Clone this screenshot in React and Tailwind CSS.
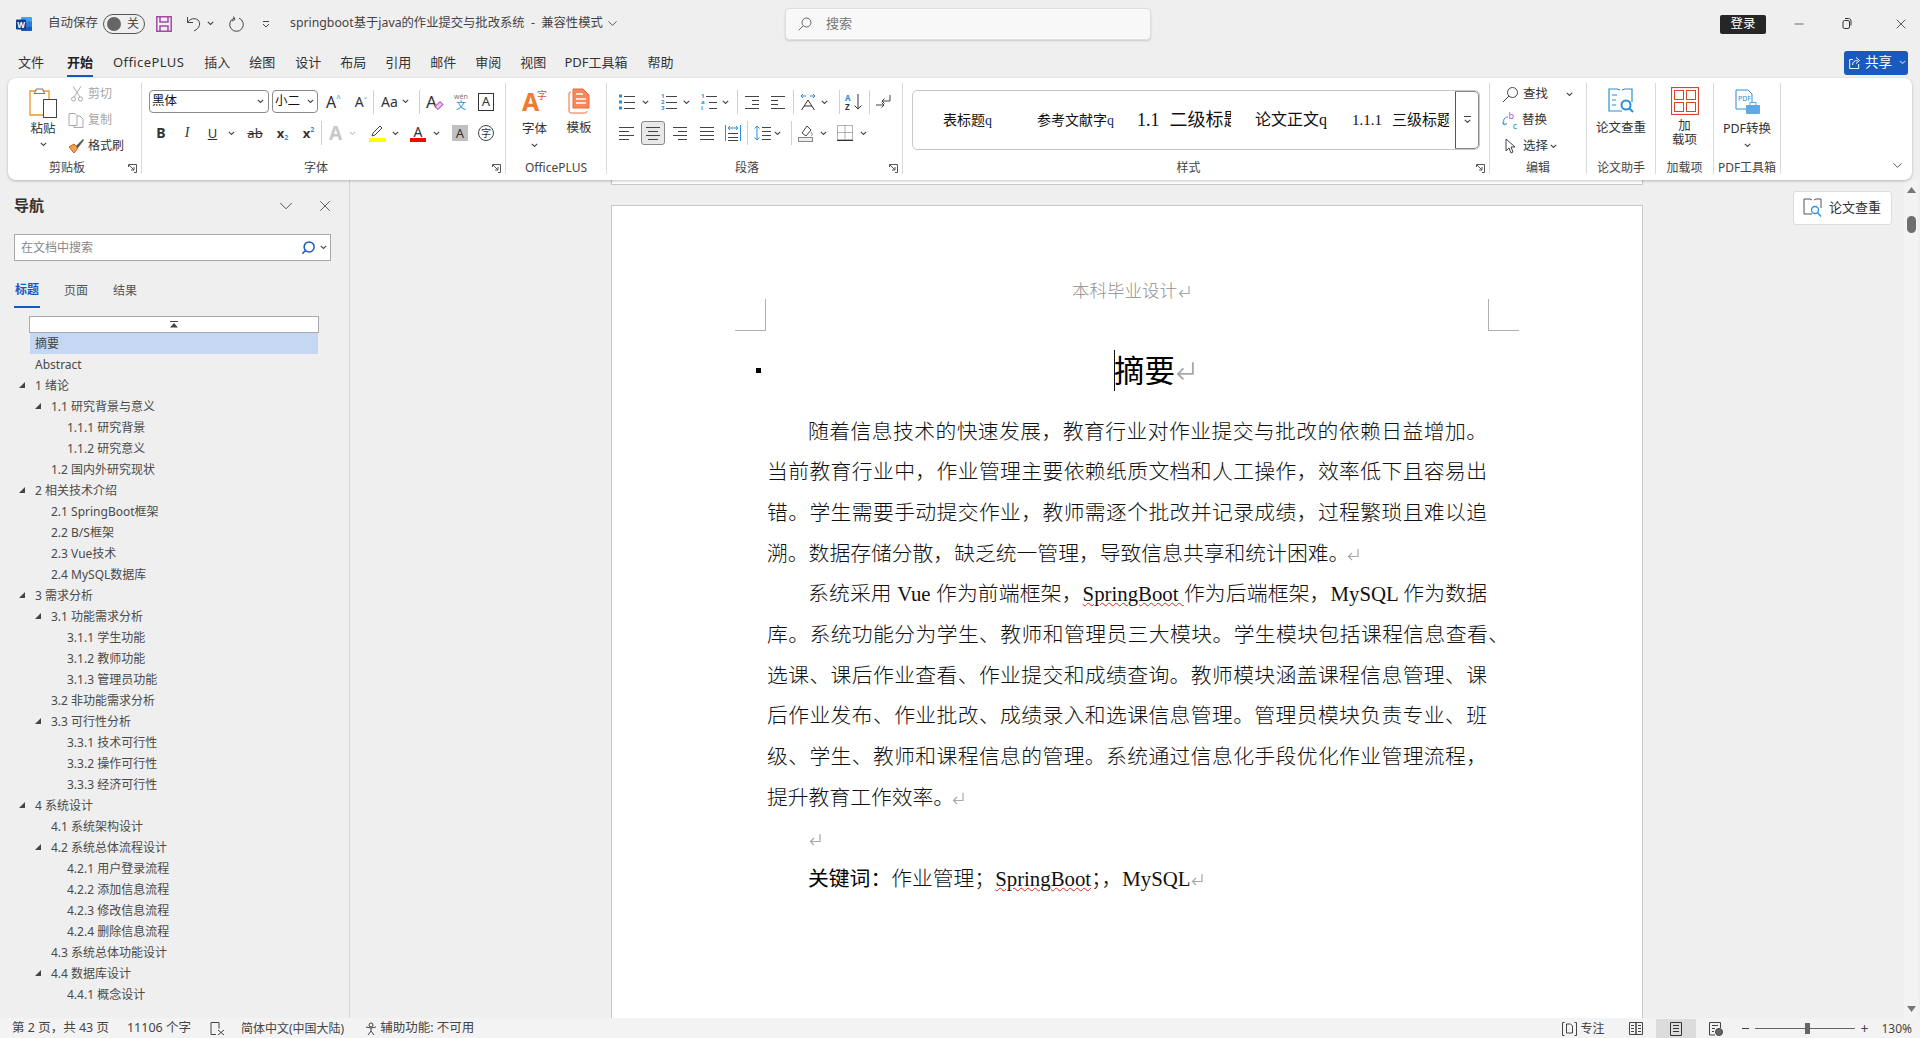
import { ChevronDown, X, Minus, Search } from "lucide-react";

const Chev = ({ className = "" }) => (
  <svg width="7" height="5" viewBox="0 0 7 5" fill="none" stroke="#444" strokeWidth="1.1" className={"shrink-0 " + className}>
    <path d="M.8.8 3.5 3.5 6.2.8" />
  </svg>
);

const Divider = ({ className = "" }) => <span className={"block w-px h-[24px] bg-[#d0d0d0] shrink-0 " + className} />;

const Launcher = () => (
  <svg width="9" height="9" viewBox="0 0 9 9" fill="none" stroke="#555" className="absolute right-[4px] bottom-[1px]">
    <path d="M.5 3V.5h8v8H6M1 1l5 5M6 3v3H3" />
  </svg>
);

const Group = ({ label, launcher, className = "", children }) => (
  <div className={"relative shrink-0 h-[91px] my-[5px] border-r border-[#dadada] flex flex-col " + className}>
    <div className="h-[78px] shrink-0">{children}</div>
    <div className={"h-[13px] flex items-center justify-center text-[12px] text-[#444] whitespace-nowrap " + (launcher ? "pr-[15px]" : "")}>{label}</div>
    {launcher && <Launcher />}
  </div>
);

const Lines = ({ rows, className = "", color = "#444" }) => (
  <svg width="16" height="16" viewBox="0 0 16 16" stroke={color} className={"shrink-0 " + className}>
    {rows.map((r, i) => (
      <path key={i} d={`M${r[0]} ${r[2]}.5H${r[1]}`} />
    ))}
  </svg>
);

const ReturnMark = ({ className = "" }) => (
  <svg width="14" height="14" viewBox="0 0 14 14" fill="none" stroke="#a8a8a8" strokeWidth="1.2" className={"inline-block shrink-0 " + className}>
    <path d="M12 2v7.5H2.5M6 6 2.5 9.500 6 13" />
  </svg>
);

const tabs = [
  ["文件", "ml-[18px]"],
  ["开始", "ml-[23px] font-semibold text-[#222]"],
  ["OfficePLUS", "ml-[20px] tracking-[0.4px]"],
  ["插入", "ml-[20px]"],
  ["绘图", "ml-[19px]"],
  ["设计", "ml-[20px]"],
  ["布局", "ml-[19px]"],
  ["引用", "ml-[19px]"],
  ["邮件", "ml-[19px]"],
  ["审阅", "ml-[19px]"],
  ["视图", "ml-[19px]"],
  ["PDF工具箱", "ml-[18px]"],
  ["帮助", "ml-[20px]"],
];

const TitleBar = () => (
  <div className="h-[47px] shrink-0 flex items-center text-[12.5px] text-[#444] whitespace-nowrap">
    <svg width="16" height="16" viewBox="0 0 16 16" className="ml-[16px] shrink-0">
      <rect x="5" y="1" width="11" height="14" rx="1" fill="#41a5ee" />
      <rect x="5" y="5.500" width="11" height="5" fill="#2b7cd3" />
      <rect x="5" y="10.500" width="11" height="4.500" rx="1" fill="#185abd" />
      <rect x="0" y="3.500" width="10" height="10" rx="1" fill="#103f91" />
      <text x="5" y="11.500" fontSize="8" fontWeight="700" fill="#fff" textAnchor="middle">W</text>
    </svg>
    <span className="ml-[16px] w-[48px]">自动保存</span>
    <span className="ml-[7px] w-[42px] h-[20px] rounded-full border border-[#555] flex items-center shrink-0">
      <span className="ml-[3px] w-[14px] h-[14px] rounded-full bg-[#666]" />
      <span className="ml-[6px] text-[12px]">关</span>
    </span>
    <svg width="16" height="16" viewBox="0 0 16 16" fill="none" stroke="#a349a4" strokeWidth="1.5" className="ml-[11px] shrink-0">
      <path d="M.8.8h14.400v14.400H.8zM4 1v5h8V1M4 15v-5h8v5" />
    </svg>
    <svg width="16" height="16" viewBox="0 0 16 16" fill="none" stroke="#444" className="ml-[14px] shrink-0">
      <path d="M1.500 1v5.500H7M1.500 6.500C4 2.500 9 1.500 12 4c3 3 2 8-4 11" />
    </svg>
    <Chev className="ml-[5px]" />
    <svg width="16" height="16" viewBox="0 0 16 16" fill="none" stroke="#444" className="ml-[15px] shrink-0">
      <path d="M5 2.200a6.800 6.800 0 1 0 5 0M4.500 .5 6 3.500 3 5" />
    </svg>
    <svg width="8" height="8" viewBox="0 0 8 8" fill="none" stroke="#444" className="ml-[17px] shrink-0">
      <path d="M1 1.500h6M1 4l3 3 3-3" />
    </svg>
    <span className="ml-[20px] w-[347px] whitespace-pre text-[12.300px] flex items-center">
      springboot基于java的作业提交与批改系统  -  兼容性模式
      <ChevronDown size={15} strokeWidth={1.4} className="ml-[2px]" />
    </span>
    <div className="ml-[148px] w-[366px] h-[32px] shrink-0 flex items-center bg-[#f8f8f8] border border-[#dedede] rounded-[4px] shadow-[0_1px_2px_rgba(0,0,0,0.15)]">
      <svg width="14" height="14" viewBox="0 0 14 14" fill="none" stroke="#666" className="ml-[12px]">
        <circle cx="8.500" cy="5.500" r="4.500" />
        <path d="M5.300 8.700.7 13.300" />
      </svg>
      <span className="ml-[14px] text-[13px] text-[#777]">搜索</span>
    </div>
    <span className="ml-[569px] w-[46px] h-[19px] mt-[1px] shrink-0 rounded-[2px] bg-[#262626] text-white text-[12.5px] flex items-center justify-center">登录</span>
    <Minus size={14} strokeWidth={1.2} className="ml-[26px] text-[#333]" />
    <svg width="10" height="11" viewBox="0 0 10 11" fill="none" stroke="#333" className="ml-[36px] shrink-0">
      <rect x="1" y="2.500" width="6.500" height="8" rx="1.500" />
      <path d="M3 .5h3.500c1.500 0 2.500 1 2.500 2.500v4.500" />
    </svg>
    <X size={16} strokeWidth={1.2} className="ml-[41px] text-[#333]" />
  </div>
);

const TabRow = () => (
  <div className="h-[31px] shrink-0 flex items-center text-[13px] text-[#333] whitespace-nowrap">
    {tabs.map(([name, cls]) => (
      <span key={name} className={"relative " + cls}>
        {name}
        {name === "开始" && <span className="absolute left-0 right-0 top-[22px] h-[2px] bg-[#185abd]" />}
      </span>
    ))}
    <span className="ml-auto mr-[12px] w-[64px] h-[24px] rounded-[3px] bg-[#185abd] text-white text-[13.5px] flex items-center">
      <svg width="12" height="13" viewBox="0 0 12 13" fill="none" stroke="#fff" className="ml-[5px] shrink-0">
        <path d="M4 3.500H.7v9h9V8M3.500 9c0-3 2-4.500 5-4.500M7 1.500l3.500 3-3.500 3" />
      </svg>
      <span className="ml-[4px]">共享</span>
      <Chev className="ml-[7px] invert" />
    </span>
  </div>
);

const Clipboard = () => (
  <Group label="剪贴板" launcher className="w-[134px]">
    <div className="flex">
      <div className="ml-[21px] w-[28px] flex flex-col items-center">
        <svg width="28" height="31" viewBox="0 0 28 31" fill="none" className="mt-[4px]">
          <path d="M1 4h19v24H1z" stroke="#e8952c" strokeWidth="1.300" />
          <path d="M7 4V2h7v2l2 2.500H5z" fill="#fff" stroke="#777" />
          <rect x="14.500" y="12.500" width="13" height="18" fill="#fff" stroke="#444" />
        </svg>
        <span className="mt-[2px] text-[12.5px] text-[#333] whitespace-nowrap">粘贴</span>
        <Chev className="mt-[3px]" />
      </div>
      <div className="ml-[11px] mt-[1px] flex flex-col text-[12px] gap-[6px] whitespace-nowrap">
        <div className="h-[20px] flex items-center text-[#a6a6a6]">
          <svg width="12" height="16" viewBox="0 0 12 16" fill="none" stroke="#aaa" className="ml-[3px] mr-[5px]">
            <path d="M2 .5 9 11M10 .5 3 11" />
            <circle cx="2.500" cy="13" r="2" />
            <circle cx="9.500" cy="13" r="2" />
          </svg>
          剪切
        </div>
        <div className="h-[20px] flex items-center text-[#a6a6a6]">
          <svg width="16" height="16" viewBox="0 0 16 16" fill="none" stroke="#aaa" className="mr-[4px]">
            <path d="M1 1.500h6l2 2v10H1zM9 4h3l3 3v8.500H6V13.500" />
          </svg>
          复制
        </div>
        <div className="h-[20px] flex items-center text-[#333]">
          <svg width="17" height="16" viewBox="0 0 17 16" fill="none" className="mr-[3px]">
            <path d="M1 9l5 6 4-5-4-4z" fill="#f2a14a" stroke="#c8641a" />
            <path d="M8 8l7-7 1 1-6 8z" fill="#555" />
          </svg>
          格式刷
        </div>
      </div>
    </div>
  </Group>
);

const ToolText = ({ className = "", children }) => (
  <span className={"shrink-0 flex items-center justify-center leading-none " + className}>{children}</span>
);

const FontGroup = () => (
  <Group label="字体" launcher className="w-[364px]">
    <div className="mt-[7px] flex items-center h-[23px] text-[#333]">
      <div className="ml-[7px] w-[120px] h-[23px] shrink-0 border border-[#8a8a8a] rounded-[4px] flex items-center text-[12.5px] text-[#111] px-[2px] justify-between">
        黑体
        <Chev className="mr-[2px]" />
      </div>
      <div className="ml-[3px] w-[46px] h-[23px] shrink-0 border border-[#8a8a8a] rounded-[4px] flex items-center text-[12.5px] text-[#111] px-[2px] justify-between">
        小二
        <Chev className="mr-[1px]" />
      </div>
      <ToolText className="ml-[8px] w-[15px] text-[16px] items-start">
        A<span className="text-[#2a8fd8] text-[8px]">^</span>
      </ToolText>
      <ToolText className="ml-[13px] w-[14px] text-[14px]">
        A<span className="text-[#2a8fd8] text-[8px]">ˇ</span>
      </ToolText>
      <Divider className="ml-[5px]" />
      <ToolText className="ml-[7px] w-[17px] text-[14px]">Aa</ToolText>
      <Chev className="ml-[4px]" />
      <Divider className="ml-[10px]" />
      <ToolText className="ml-[6px] w-[18px] text-[17px] justify-start">
        A
        <span className="block w-[8px] h-[5px] border border-[#b35ac6] bg-[#e8c8ee] -rotate-45 -ml-[2px] mt-[8px]" />
      </ToolText>
      <span className="ml-[9px] w-[16px] shrink-0 flex flex-col items-center leading-none">
        <span className="text-[7px] text-[#777]">wén</span>
        <span className="text-[10px] text-[#2a8fd8]">文</span>
      </span>
      <ToolText className="ml-[9px] w-[16px] h-[18px] border border-[#333] text-[13px]">A</ToolText>
    </div>
    <div className="mt-[8px] flex items-center h-[24px] text-[#333]">
      <ToolText className="ml-[15px] w-[8px] text-[14px] font-bold">B</ToolText>
      <ToolText className="ml-[18px] w-[8px] text-[14px] italic font-['Liberation_Serif',serif]">I</ToolText>
      <ToolText className="ml-[17px] w-[9px] text-[13px] underline">U</ToolText>
      <Chev className="ml-[11px]" />
      <ToolText className="ml-[13px] w-[14px] text-[13px] line-through">ab</ToolText>
      <ToolText className="ml-[15px] w-[11px] text-[13px] font-bold">
        x<span className="text-[7px] text-[#2a8fd8] mt-[8px]">2</span>
      </ToolText>
      <ToolText className="ml-[15px] w-[11px] text-[13px] font-bold">
        x<span className="text-[7px] text-[#2a8fd8] -mt-[7px]">2</span>
      </ToolText>
      <Divider className="ml-[7px]" />
      <ToolText className="ml-[6px] w-[15px] text-[19px] font-bold text-[#c8c8c8]">A</ToolText>
      <Chev className="ml-[6px] opacity-30" />
      <span className="ml-[13px] w-[16px] shrink-0 flex flex-col items-center">
        <svg width="14" height="13" viewBox="0 0 14 13" fill="none" stroke="#444">
          <path d="M2 11l1-3 7-7 2 2-7 7z" />
        </svg>
        <span className="block w-[16px] h-[4px] bg-[#ffff00]" />
      </span>
      <Chev className="ml-[7px]" />
      <span className="ml-[11px] w-[16px] shrink-0 flex flex-col items-center leading-none">
        <span className="text-[14px] h-[13px]">A</span>
        <span className="block w-[16px] h-[4px] bg-[#ff0000]" />
      </span>
      <Chev className="ml-[7px]" />
      <ToolText className="ml-[12px] w-[16px] h-[16px] bg-[#c0c0c0] text-[13px]">A</ToolText>
      <ToolText className="ml-[10px] w-[16px] h-[16px] rounded-full border border-[#444] text-[10px]">字</ToolText>
    </div>
  </Group>
);

const OfficePlus = () => (
  <Group label="OfficePLUS" className="w-[101px]">
    <div className="flex">
      <div className="ml-[16px] w-[25px] flex flex-col items-center">
        <div className="mt-[7px] h-[23px] relative w-[25px] text-[25px] leading-[23px] font-bold text-[#f27a2f]">
          A<span className="absolute right-0 top-0 text-[10px] leading-none font-normal text-[#e0532a]">字</span>
        </div>
        <span className="mt-[7px] text-[12.5px] text-[#333] whitespace-nowrap">字体</span>
        <Chev className="mt-[4px]" />
      </div>
      <div className="ml-[19px] w-[26px] flex flex-col items-center">
        <svg width="24" height="26" viewBox="0 0 24 26" fill="none" className="mt-[5px]">
          <path d="M4 4 2 5v18c0 1.500 1 2 2 2h14c1 0 2-.5 2-2" stroke="#ef6a3a" />
          <path d="M6 1h10l6 6v13H6z" fill="#f8885a" stroke="#ef6a3a" />
          <path d="M9 6h7M9 11h10M9 15h10" stroke="#fff" strokeWidth="1.500" />
        </svg>
        <span className="mt-[5px] text-[12.5px] text-[#333] whitespace-nowrap">模板</span>
      </div>
    </div>
  </Group>
);

const ListIcon = ({ kind, className = "" }) => (
  <svg width="16" height="20" viewBox="0 -2 16 20" className={"shrink-0 " + className}>
    {[2, 8, 14].map((y) => (
      <g key={y}>
        {kind === "dots" ? (
          <rect x="0" y={y - 1.5} width="3" height="3" fill="#2a8fd8" />
        ) : (
          <text x="0" y={y + 2} fontSize="6" fontWeight="700" fill="#2a8fd8">{y === 2 ? 1 : y === 8 ? (kind === "multi" ? "a" : 2) : (kind === "multi" ? "i" : 3)}</text>
        )}
        <path d={`M${kind === "multi" && y > 2 ? 8 : 5} ${y}.5H16`} stroke="#444" />
      </g>
    ))}
  </svg>
);

const Paragraph = () => (
  <Group label="段落" launcher className="w-[296px]">
    <div className="mt-[7px] h-[24px] flex items-center text-[#333]">
      <ListIcon kind="dots" className="ml-[12px]" />
      <Chev className="ml-[7px]" />
      <ListIcon kind="num" className="ml-[12px]" />
      <Chev className="ml-[6px]" />
      <ListIcon kind="multi" className="ml-[11px]" />
      <Chev className="ml-[5px]" />
      <Divider className="ml-[8px]" />
      <Lines className="ml-[6px]" rows={[[1, 15, 2], [8, 15, 6], [8, 15, 10], [1, 15, 14]]} />
      <Lines className="ml-[10px]" rows={[[1, 15, 2], [1, 8, 6], [1, 8, 10], [1, 15, 14]]} />
      <Divider className="ml-[7px]" />
      <svg width="16" height="18" viewBox="0 0 16 18" fill="none" className="ml-[6px] shrink-0">
        <path d="M1 3h5M1 3l2-2M1 3l2 2M15 3h-5M15 3l-2-2M15 3l-2 2" stroke="#2a8fd8" />
        <path d="M1.500 17 8 7l6.500 10M4 13h8" stroke="#333" />
      </svg>
      <Chev className="ml-[5px]" />
      <Divider className="ml-[11px]" />
      <svg width="17" height="18" viewBox="0 0 17 18" fill="none" className="ml-[5px] shrink-0">
        <text x="0" y="8" fontSize="8" fontWeight="700" fill="#2a8fd8">A</text>
        <text x="0" y="16.500" fontSize="8" fontWeight="700" fill="#333">Z</text>
        <path d="M13 1v15M9.500 12.500 13 16l3.500-3.500" stroke="#333" />
      </svg>
      <Divider className="ml-[7px]" />
      <svg width="16" height="16" viewBox="0 0 16 16" fill="none" stroke="#444" className="ml-[5px] shrink-0">
        <path d="M15 1v6H7M9.500 4.500 7 7l2.500 2.500M1 11h8M6.500 8.500 9 11l-2.500 2.500" />
      </svg>
    </div>
    <div className="mt-[7px] h-[24px] flex items-center text-[#333]">
      <Lines className="ml-[12px]" rows={[[0, 15, 2], [0, 10, 6], [0, 15, 10], [0, 10, 14]]} />
      <span className="ml-[6px] w-[24px] h-[24px] shrink-0 rounded-[3px] border border-[#888] bg-[#e8e8e8] flex items-center justify-center">
        <Lines rows={[[1, 15, 2], [3, 13, 6], [1, 15, 10], [3, 13, 14]]} />
      </span>
      <Lines className="ml-[7px]" rows={[[1, 15, 2], [6, 15, 6], [1, 15, 10], [6, 15, 14]]} />
      <Lines className="ml-[11px]" rows={[[1, 15, 2], [1, 15, 6], [1, 15, 10], [1, 15, 14]]} />
      <svg width="16" height="18" viewBox="0 0 16 18" fill="none" className="ml-[10px] shrink-0">
        <path d="M.5 1v16M15.500 1v16M3 4h10M3 4l2-2M3 4l2 2M13 4l-2-2M13 4l-2 2" stroke="#2a8fd8" />
        <path d="M3 9.500h10M3 13.500h10M3 16.500h10" stroke="#444" />
      </svg>
      <Divider className="ml-[6px]" />
      <svg width="17" height="16" viewBox="0 0 17 16" fill="none" className="ml-[6px] shrink-0">
        <path d="M3 1v14M.5 3.500 3 1l2.500 2.500M.5 12.500 3 15l2.500-2.500" stroke="#2a8fd8" />
        <path d="M8 2.500h9M8 6.500h9M8 10.500h9M8 14.500h9" stroke="#444" />
      </svg>
      <Chev className="ml-[3px]" />
      <Divider className="ml-[10px]" />
      <svg width="16" height="18" viewBox="0 0 16 18" fill="none" className="ml-[6px] shrink-0">
        <path d="M4 9l5-7 4 4-5 6z" fill="#fff" stroke="#444" />
        <path d="M13 8c1 1.500 2 3 0 4" stroke="#2a8fd8" />
        <rect x=".5" y="13.500" width="14" height="4" fill="#eee" stroke="#888" />
      </svg>
      <Chev className="ml-[6px]" />
      <svg width="16" height="16" viewBox="0 0 16 16" fill="none" className="ml-[10px] shrink-0">
        <path d="M.5.5h15v14H.5zM8 .5v14M.5 7.500h15" stroke="#666" strokeDasharray="1 1" />
        <path d="M0 15.500h16" stroke="#333" />
      </svg>
      <Chev className="ml-[7px]" />
    </div>
  </Group>
);

const StyleGallery = () => (
  <Group label="样式" launcher className="w-[587px]">
    <div className="ml-[9px] mt-[7px] w-[568px] h-[60px] border border-[#c8c8c8] rounded-[5px] flex items-center overflow-hidden text-[#111] whitespace-nowrap font-['Liberation_Serif','Noto_Sans_CJK_SC',serif]">
      <span className="ml-[30px] w-[49px] shrink-0 text-[14px] font-['Noto_Sans_CJK_SC',sans-serif]">表标题<span className="font-['Liberation_Serif',serif] text-[#112b6b]">q</span></span>
      <span className="ml-[45px] w-[77px] shrink-0 text-[14px]">参考文献字<span className="text-[#112b6b]">q</span></span>
      <span className="ml-[23px] w-[94px] shrink-0 overflow-hidden text-[18px]">1.1<span className="ml-[10px]">二级标题</span></span>
      <span className="ml-[24px] w-[74px] shrink-0 text-[16px]">论文正文<span>q</span></span>
      <span className="ml-[23px] w-[97px] shrink-0 overflow-hidden text-[15px]">1.1.1<span className="ml-[10px]">三级标题</span></span>
      <span className="ml-auto w-[24px] h-full shrink-0 border-l border-[#555] rounded-r-[5px] flex flex-col items-center justify-center gap-[2px] border-y border-r border-y-[#888] border-r-[#888]">
        <span className="block w-[7px] h-px bg-[#444]" />
        <Chev />
      </span>
    </div>
  </Group>
);

const Editing = () => (
  <Group label="编辑" className="w-[97px]">
    <div className="flex flex-col text-[12.5px] text-[#333] whitespace-nowrap mt-[1px] gap-[5px]">
      <div className="h-[21px] flex items-center">
        <svg width="17" height="17" viewBox="0 0 17 17" fill="none" stroke="#444" className="ml-[12px] mr-[4px]">
          <circle cx="10.500" cy="6.500" r="5" />
          <path d="M7 10 1 16" />
        </svg>
        查找
        <Chev className="ml-[18px]" />
      </div>
      <div className="h-[21px] flex items-center">
        <span className="ml-[12px] w-[15px] mr-[5px] relative h-[19px] text-[9px] leading-none">
          <span className="absolute right-[3px] top-0 text-[#b35ac6]">b</span>
          <span className="absolute right-0 bottom-0 text-[#2a8fd8]">c</span>
          <svg width="10" height="14" viewBox="0 0 10 14" fill="none" stroke="#2a8fd8" className="absolute left-0 top-[4px]">
            <path d="M6 2C2 2 1 5 2 9M.5 7 2 10l3-1.500M9 12" />
          </svg>
        </span>
        替换
      </div>
      <div className="h-[21px] flex items-center">
        <svg width="13" height="17" viewBox="0 0 13 17" fill="none" stroke="#444" className="ml-[15px] mr-[5px]">
          <path d="M1 1v12l3-3 2 5 2-1-2-5h4z" />
        </svg>
        选择
        <Chev className="ml-[2px]" />
      </div>
    </div>
  </Group>
);

const Thesis = () => (
  <Group label="论文助手" className="w-[69px]">
    <div className="flex flex-col items-center">
      <svg width="26" height="26" viewBox="0 0 26 26" fill="none" className="mt-[5px]">
        <path d="M12 2 9 1H1v22h13M14 2l3-1h7v13" stroke="#2a8fd8" strokeWidth="1.200" />
        <path d="M4 7h5M4 12h4M4 17h4" stroke="#2a8fd8" />
        <circle cx="18" cy="17" r="4.500" stroke="#2a8fd8" strokeWidth="2" />
        <path d="M21 20l4 4" stroke="#2a8fd8" strokeWidth="2" />
      </svg>
      <span className="mt-[5px] text-[12.5px] text-[#333] whitespace-nowrap">论文查重</span>
    </div>
  </Group>
);

const AddIns = () => (
  <Group label="加载项" className="w-[58px]">
    <div className="flex flex-col items-center">
      <svg width="28" height="28" viewBox="0 0 28 28" fill="none" stroke="#d9452b" className="mt-[4px]">
        <rect x=".5" y=".5" width="27" height="27" strokeWidth="1.200" />
        <rect x="3.500" y="3.500" width="9" height="9" />
        <rect x="15.500" y="3.500" width="9" height="9" />
        <rect x="3.500" y="15.500" width="9" height="9" />
        <rect x="15.500" y="15.500" width="9" height="9" />
      </svg>
      <span className="mt-[4px] text-[12.5px] leading-[14px] text-[#333] text-center">加<br />载项</span>
    </div>
  </Group>
);

const Pdf = () => (
  <Group label="PDF工具箱" className="w-[67px]">
    <div className="flex flex-col items-center">
      <svg width="26" height="26" viewBox="0 0 26 26" fill="none" className="mt-[6px] ml-[2px]">
        <path d="M16 20H1V1h12l4 4v9" stroke="#2a8fd8" />
        <text x="3" y="12" fontSize="7" fill="#2a8fd8">PDF</text>
        <rect x="11" y="16" width="14" height="9" rx="1" fill="#5fa8e8" />
        <rect x="15" y="13.500" width="6" height="3" stroke="#5fa8e8" />
      </svg>
      <span className="mt-[5px] text-[12.5px] text-[#333] whitespace-nowrap">PDF转换</span>
      <Chev className="mt-[4px]" />
    </div>
  </Group>
);

const Ribbon = () => (
  <div className="relative z-10 mx-[8px] h-[102px] shrink-0 rounded-[8px] bg-white shadow-[0_1px_3px_rgba(0,0,0,0.25)] flex">
    <Clipboard />
    <FontGroup />
    <OfficePlus />
    <Paragraph />
    <StyleGallery />
    <Editing />
    <Thesis />
    <AddIns />
    <Pdf />
    <ChevronDown size={15} strokeWidth={1.3} className="absolute right-[7px] bottom-[7px] text-[#333]" />
  </div>
);

const headings = [
  [0, "Abstract"],
  [0, "1 绪论", true],
  [1, "1.1 研究背景与意义", true],
  [2, "1.1.1 研究背景"],
  [2, "1.1.2 研究意义"],
  [1, "1.2 国内外研究现状"],
  [0, "2 相关技术介绍", true],
  [1, "2.1 SpringBoot框架"],
  [1, "2.2 B/S框架"],
  [1, "2.3 Vue技术"],
  [1, "2.4 MySQL数据库"],
  [0, "3 需求分析", true],
  [1, "3.1 功能需求分析", true],
  [2, "3.1.1 学生功能"],
  [2, "3.1.2 教师功能"],
  [2, "3.1.3 管理员功能"],
  [1, "3.2 非功能需求分析"],
  [1, "3.3 可行性分析", true],
  [2, "3.3.1 技术可行性"],
  [2, "3.3.2 操作可行性"],
  [2, "3.3.3 经济可行性"],
  [0, "4 系统设计", true],
  [1, "4.1 系统架构设计"],
  [1, "4.2 系统总体流程设计", true],
  [2, "4.2.1 用户登录流程"],
  [2, "4.2.2 添加信息流程"],
  [2, "4.2.3 修改信息流程"],
  [2, "4.2.4 删除信息流程"],
  [1, "4.3 系统总体功能设计"],
  [1, "4.4 数据库设计", true],
  [2, "4.4.1 概念设计"],
];

const indent = ["pl-[35px]", "pl-[51px]", "pl-[67px]"];
const arrowPos = ["left-[19px]", "left-[35px]"];

const NavPane = () => (
  <aside className="w-[350px] shrink-0 border-r border-[#d6d6d6] overflow-hidden whitespace-nowrap">
    <div className="h-[54px] flex items-center pl-[14px] pr-[15px] pb-[3px]">
      <span className="text-[15px] font-semibold text-[#333]">导航</span>
      <ChevronDown size={22} strokeWidth={0.9} className="ml-auto text-[#333]" />
      <X size={18} strokeWidth={1} className="ml-[19px] text-[#333]" />
    </div>
    <div className="ml-[14px] w-[317px] h-[27px] border border-[#a8a8a8] bg-white flex items-center text-[12px] text-[#888]">
      <span className="ml-[6px]">在文档中搜索</span>
      <Search size={15} strokeWidth={2.4} className="ml-auto text-[#185abd] -scale-x-100" />
      <Chev className="ml-[4px] mr-[3px]" />
    </div>
    <div className="h-[47px] pl-[14px] flex text-[12px] text-[#555]">
      <span className="w-[26px] h-full flex items-center justify-center border-b-2 border-[#185abd] text-[#185abd] font-semibold pt-[13px]">标题</span>
      <span className="ml-[24px] h-full flex items-center pt-[13px]">页面</span>
      <span className="ml-[25px] h-full flex items-center pt-[13px]">结果</span>
    </div>
    <div className="mt-[8px] ml-[29px] w-[290px] h-[17px] border border-[#aaa] bg-white flex items-center justify-center">
      <svg width="8" height="7" viewBox="0 0 8 7" fill="#444">
        <path d="M0 0h8v1H0zM4 2 8 6.500H0z" />
      </svg>
    </div>
    <div className="ml-[30px] w-[288px] h-[21px] bg-[#c5d7f2] flex items-center pl-[5px] text-[12px] text-[#444]">摘要</div>
    {headings.map(([level, text, open]) => (
      <div key={text} className={"relative h-[21px] flex items-center text-[12px] text-[#4a4a4a] " + indent[level]}>
        {open && (
          <svg width="6" height="6" viewBox="0 0 6 6" fill="#444" className={"absolute top-[7px] " + arrowPos[level]}>
            <path d="M0 6h6V0z" />
          </svg>
        )}
        {text}
      </div>
    ))}
  </aside>
);

const paraOne = [
  "当前教育行业中，作业管理主要依赖纸质文档和人工操作，效率低下且容易出",
  "错。学生需要手动提交作业，教师需逐个批改并记录成绩，过程繁琐且难以追",
];
const paraTwo = [
  "选课、课后作业查看、作业提交和成绩查询。教师模块涵盖课程信息管理、课",
  "后作业发布、作业批改、成绩录入和选课信息管理。管理员模块负责专业、班",
  "级、学生、教师和课程信息的管理。系统通过信息化手段优化作业管理流程，",
];

const lineCls = "h-[40.7px] leading-[40.7px] whitespace-nowrap";
const justified = lineCls + " [text-align-last:justify]";
const squiggle = "underline decoration-wavy decoration-[#e02020] decoration-1 underline-offset-[1px]";

const Page = () => (
  <div className="relative w-[1032px] h-[813px] shrink-0 bg-white border border-[#c8c8c8] border-b-0 font-['Liberation_Serif','Noto_Sans_CJK_SC',serif] text-[20.8px] font-light text-[#111]">
    <span className="absolute left-[123px] top-[93px] w-[31px] h-[32px] border-r border-b border-[#b0b0b0]" />
    <span className="absolute left-[876px] top-[93px] w-[31px] h-[32px] border-l border-b border-[#b0b0b0]" />
    <span className="absolute left-[502px] top-[144px] w-px h-[41px] bg-[#111]" />
    <span className="absolute left-[144px] top-[162px] w-[5px] h-[5px] bg-black" />
    <div className="pl-[155px] w-[875px] pt-[65px]">
      <div className="h-[40px] flex items-center pl-[305px] text-[17.5px] text-[#8f8f8f]">
        本科毕业设计
        <ReturnMark />
      </div>
      <div className="mt-[34px] h-[50px] flex items-center pl-[347px] text-[30.500px] font-normal font-['Noto_Sans_CJK_SC',sans-serif] text-black">
        摘要
        <ReturnMark className="w-[22px] h-[22px] -ml-[1px]" />
      </div>
      <div className="mt-[16.500px] w-[720px]">
        <div className={justified + " pl-[41px]"}>随着信息技术的快速发展，教育行业对作业提交与批改的依赖日益增加。</div>
        {paraOne.map((t) => (
          <div key={t} className={justified}>{t}</div>
        ))}
        <div className={lineCls + " flex items-center"}>
          溯。数据存储分散，缺乏统一管理，导致信息共享和统计困难。
          <ReturnMark className="-ml-[3px]" />
        </div>
        <div className={justified + " pl-[41px]"}>
          系统采用 Vue 作为前端框架，<span className={squiggle}>SpringBoot </span>作为后端框架，MySQL 作为数据
        </div>
        <div className={justified + " w-[742px]"}>库。系统功能分为学生、教师和管理员三大模块。学生模块包括课程信息查看、</div>
        {paraTwo.map((t) => (
          <div key={t} className={justified}>{t}</div>
        ))}
        <div className={lineCls + " flex items-center"}>
          提升教育工作效率。
          <ReturnMark className="-ml-[3px]" />
        </div>
        <div className={lineCls + " flex items-center pl-[41px]"}>
          <ReturnMark />
        </div>
        <div className={lineCls + " pl-[41px] flex items-center"}>
          <span className="font-normal text-black">关键词：</span>
          作业管理；
          <span className={squiggle}>SpringBoot</span>
          ；，MySQL
          <ReturnMark />
        </div>
      </div>
    </div>
  </div>
);

const DocArea = () => (
  <main className="flex-1 min-w-0 flex overflow-hidden">
    <div className="ml-[261px] w-[1032px] shrink-0 flex flex-col">
      <div className="h-[5px] shrink-0 bg-white border-x border-b border-[#c8c8c8]" />
      <div className="h-[20px] shrink-0" />
      <Page />
    </div>
    <div className="ml-[150px] mt-[11px] w-[99px] h-[34px] shrink-0 rounded-[3px] bg-white border border-[#dcdcdc] flex items-center text-[13px] text-[#333] whitespace-nowrap">
      <svg width="20" height="20" viewBox="0 0 20 20" fill="none" className="ml-[9px] mr-[6px]">
        <path d="M9 2 7 1H1v15h8M11 2l2-1h5v9" stroke="#555" />
        <circle cx="12" cy="12" r="3.500" stroke="#2a8fd8" strokeWidth="1.300" />
        <path d="M14.500 14.500 18 18.500" stroke="#2a8fd8" strokeWidth="1.300" />
      </svg>
      论文查重
    </div>
    <div className="ml-[12px] w-[14px] shrink-0 bg-[#f3f3f3] flex flex-col items-center">
      <svg width="9" height="6" viewBox="0 0 9 6" fill="#777" className="mt-[7px]">
        <path d="M4.500 0 9 6H0z" />
      </svg>
      <span className="mt-[23px] w-[9px] h-[17px] rounded-full bg-[#6e6e6e]" />
      <svg width="9" height="6" viewBox="0 0 9 6" fill="#777" className="mt-auto mb-[6px]">
        <path d="M4.500 6 9 0H0z" />
      </svg>
    </div>
  </main>
);

const StatusBar = () => (
  <footer className="h-[20px] shrink-0 bg-[#f3f3f3] flex items-center pt-[1px] text-[12.5px] text-[#444] whitespace-nowrap">
    <span className="ml-[12px]">第 2 页，共 43 页</span>
    <span className="ml-[18px]">11106 个字</span>
    <svg width="15" height="14" viewBox="0 0 15 14" fill="none" stroke="#444" className="ml-[19px] shrink-0">
      <path d="M9 .5H1v12h5M9 .5v6M8 8l6 5M14 8l-6 5" />
    </svg>
    <span className="ml-[16px] text-[12px]">简体中文(中国大陆)</span>
    <svg width="15" height="14" viewBox="0 0 15 14" fill="none" stroke="#444" className="ml-[20px] mr-[1px] shrink-0">
      <circle cx="7" cy="3" r="2" />
      <path d="M2 5l5 1 5-1M7 6v3l-3 4M7 9l3 4" />
    </svg>
    <span>辅助功能: 不可用</span>
    <svg width="15" height="14" viewBox="0 0 15 14" fill="none" stroke="#444" className="ml-auto shrink-0">
      <path d="M2.500.5h-2v13h2M12.500.5h2v13h-2M4.500 2h4l2 2v7h-6z" />
    </svg>
    <span className="ml-[3px] text-[12px]">专注</span>
    <svg width="14" height="13" viewBox="0 0 14 13" fill="none" stroke="#444" className="ml-[25px] shrink-0">
      <path d="M.5.5H7v12H.5zM7 .5h6.500v12H7zM2 3.500h3M2 6.500h3M2 9.500h3M9 3.500h3M9 6.500h3M9 9.500h3" />
    </svg>
    <span className="ml-[13px] w-[40px] h-full bg-[#dcdcdc] flex items-center justify-center">
      <svg width="12" height="14" viewBox="0 0 12 14" fill="none" stroke="#333">
        <path d="M.5.5h11v13H.5zM3 3.500h6M3 6.500h6M3 9.500h6" />
      </svg>
    </span>
    <svg width="14" height="14" viewBox="0 0 14 14" fill="none" stroke="#444" className="ml-[13px] shrink-0">
      <path d="M6 13H.5V.5h11V6M3 3.500h6M3 6.500h3M3 9.500h2" />
      <circle cx="10" cy="10" r="3.500" fill="#666" />
    </svg>
    <span className="ml-[19px] w-[7px] h-px bg-[#444]" />
    <span className="relative ml-[6px] w-[100px] h-px bg-[#666]">
      <span className="absolute left-[50px] -top-[5px] w-[5px] h-[11px] bg-[#666]" />
    </span>
    <span className="ml-[5px] text-[14px] leading-none">+</span>
    <span className="ml-[13px] mr-[8px] text-[12px]">130%</span>
  </footer>
);

const App = () => {
  return (
    <div className="w-full h-screen flex flex-col overflow-hidden bg-[#efefef] font-['Noto_Sans','Noto_Sans_CJK_SC',sans-serif]">
      <TitleBar />
      <TabRow />
      <Ribbon />
      <div className="flex-1 min-h-0 flex">
        <NavPane />
        <DocArea />
      </div>
      <StatusBar />
    </div>
  );
};

export default App;
